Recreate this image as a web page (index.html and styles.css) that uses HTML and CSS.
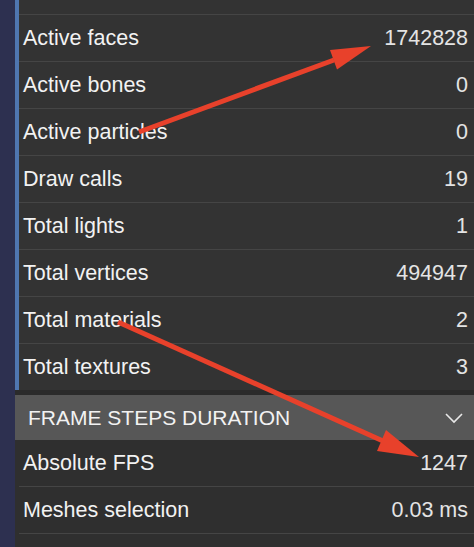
FILE: index.html
```html
<!DOCTYPE html>
<html>
<head>
<meta charset="utf-8">
<link rel="stylesheet" href="styles.css">
</head>
<body>
<div class="panel">
  <div class="stats">
    <div class="row"></div>
    <div class="row"><span class="label">Active faces</span><span class="value">1742828</span></div>
    <div class="row"><span class="label">Active bones</span><span class="value">0</span></div>
    <div class="row"><span class="label">Active particles</span><span class="value">0</span></div>
    <div class="row"><span class="label">Draw calls</span><span class="value">19</span></div>
    <div class="row"><span class="label">Total lights</span><span class="value">1</span></div>
    <div class="row"><span class="label">Total vertices</span><span class="value">494947</span></div>
    <div class="row"><span class="label">Total materials</span><span class="value">2</span></div>
    <div class="row last"><span class="label">Total textures</span><span class="value">3</span></div>
  </div>
  <div class="gap"></div>
  <div class="header">
    <span class="header-title">FRAME STEPS DURATION</span>
    <svg class="chevron" width="20" height="12" viewBox="0 0 20 12"><polyline points="2,2 10,10 18,2" fill="none" stroke="#e8e8e8" stroke-width="1.6"/></svg>
  </div>
  <div class="steps">
    <div class="row"><span class="label">Absolute FPS</span><span class="value">1247</span></div>
    <div class="row"><span class="label">Meshes selection</span><span class="value">0.03 ms</span></div>
    <div class="row tail"></div>
  </div>
</div>
<svg class="annotations" width="474" height="547" viewBox="0 0 474 547">
  <line x1="139" y1="132" x2="334" y2="60" stroke="#e8412b" stroke-width="5"/>
  <polygon points="371,46 330,50 337,69.5" fill="#e8412b"/>
  <line x1="118" y1="322" x2="383" y2="441" stroke="#e8412b" stroke-width="5"/>
  <polygon points="419,457 386,430 377,451" fill="#e8412b"/>
</svg>
</body>
</html>
```
FILE: styles.css
```css
html, body {
  margin: 0;
  padding: 0;
}
body {
  width: 474px;
  height: 547px;
  overflow: hidden;
  background: #2d3050;
  font-family: "Liberation Sans", Arial, Helvetica, sans-serif;
  position: relative;
}
.panel {
  margin-left: 15px;
  background: #2b2b2b;
}
.stats {
  margin-top: -32px;
  background: #333333;
  border-left: 4px solid #4f76b0;
}
.row {
  height: 46px;
  border-bottom: 1px solid #454545;
  display: flex;
  align-items: center;
  justify-content: space-between;
  padding: 0 6px 0 4px;
  font-size: 21.5px;
  color: #f2f2f2;
}
.row.last {
  border-bottom: none;
}
.row.tail {
  height: 13px;
  border-bottom: none;
}
.value {
  color: #e4e4e4;
}
.gap {
  height: 5px;
  background: #2b2b2b;
}
.header {
  height: 45px;
  background: #575757;
  display: flex;
  align-items: center;
  justify-content: space-between;
  padding: 0 10px 0 13px;
  color: #f2f2f2;
  font-size: 21px;
}
.chevron {
  display: block;
}
.steps {
  background: #2f2f2f;
  border-left: 4px solid #2f2f2f;
}
.annotations {
  position: absolute;
  left: 0;
  top: 0;
  pointer-events: none;
}
```
